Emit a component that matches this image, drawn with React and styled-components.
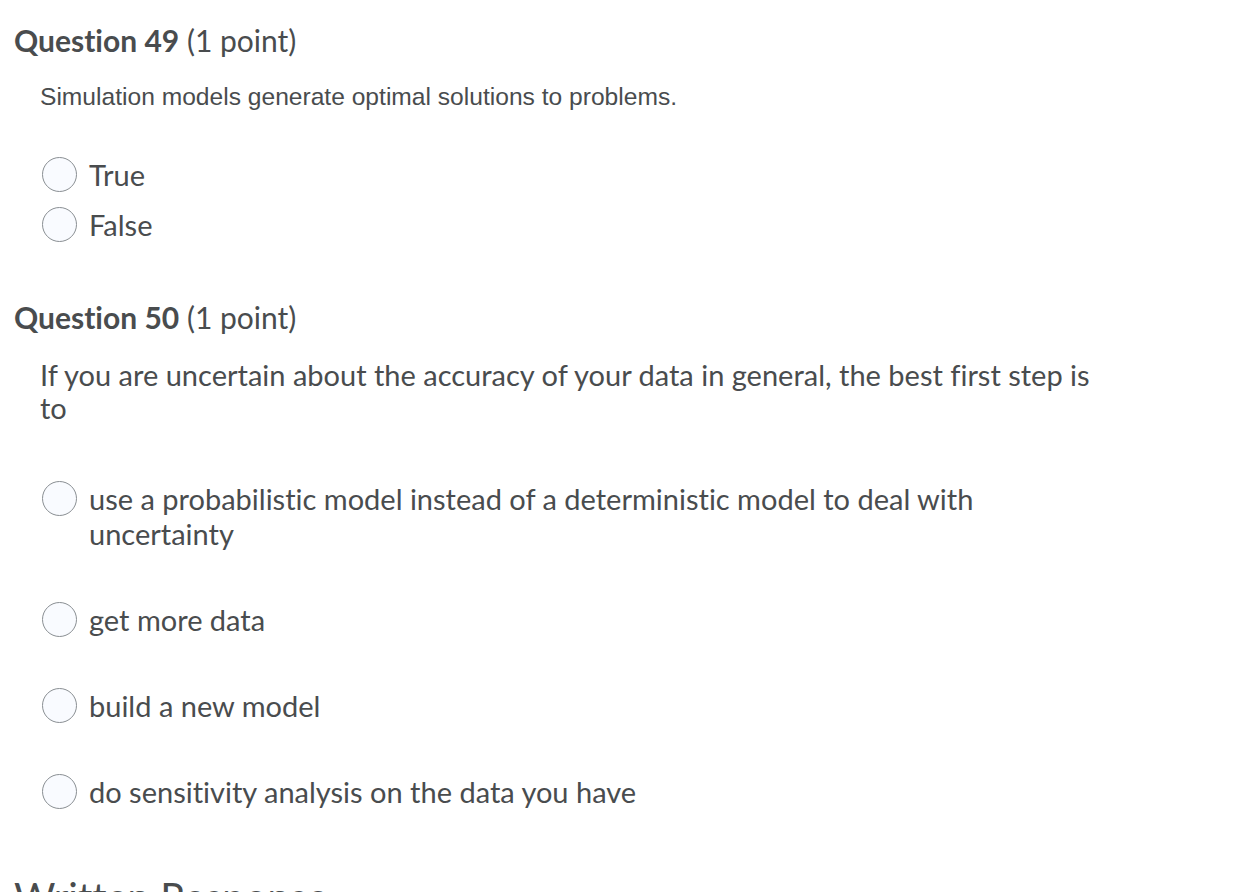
import React from "react";
import styled, { createGlobalStyle } from "styled-components";

const Global = createGlobalStyle`
  html, body { margin: 0; padding: 0; background: #ffffff; }
  body {
    font-family: Lato, "Noto Sans", sans-serif;
    color: #494c4e;
    font-variant-ligatures: none;
  }
`;

const Page = styled.main`
  padding: 22px 0 0 14px;
  overflow: hidden;
  height: 892px;
  box-sizing: border-box;
`;

const Question = styled.section`
  display: flex;
  flex-direction: column;
  margin-bottom: ${(p) => p.$after}px;
`;

const Heading = styled.h2`
  margin: 0;
  font-family: Lato, sans-serif;
  font-size: 30px;
  line-height: 36px;
  font-weight: 400;
  color: #494c4e;
  b { font-weight: 700; }
`;

const Prompt = styled.p`
  margin: ${(p) => p.$top}px 0 0 26px;
  max-width: ${(p) => p.$max}px;
  font-family: ${(p) => (p.$arial ? `"Liberation Sans", Arial, sans-serif` : `Lato, sans-serif`)};
  font-size: ${(p) => p.$size}px;
  line-height: ${(p) => p.$lh}px;
  color: #494c4e;
`;

const Options = styled.div`
  display: flex;
  flex-direction: column;
  gap: ${(p) => p.$gap}px;
  margin: ${(p) => p.$top}px 0 0 28px;
`;

const Option = styled.label`
  display: flex;
  align-items: flex-start;
  gap: 12px;
`;

const Radio = styled.span`
  flex: none;
  width: 35px;
  height: 35px;
  box-sizing: border-box;
  border-radius: 50%;
  border: 1px solid #8a8f93;
  background: #f9fbff;
`;

const Label = styled.span`
  font-family: Lato, sans-serif;
  font-size: 29px;
  line-height: 35px;
  color: #494c4e;
  max-width: 960px;
`;

const NextHeading = styled.h2`
  margin: 64px 0 0 0;
  font-family: Lato, sans-serif;
  font-size: 40px;
  line-height: 48px;
  font-weight: 400;
  color: #494c4e;
`;

const q50 = [
  "use a probabilistic model instead of a deterministic model to deal with uncertainty",
  "get more data",
  "build a new model",
  "do sensitivity analysis on the data you have",
];

export default function App() {
  return (
    <>
      <Global />
      <Page>
        <Question $after={57}>
          <Heading>
            <b>Question 49</b> (1 point)
          </Heading>
          <Prompt $arial $size={24.6} $lh={28} $top={25} $max={1100}>
            Simulation models generate optimal solutions to problems.
          </Prompt>
          <Options $gap={15} $top={46}>
            {["True", "False"].map((t) => (
              <Option key={t}>
                <Radio />
                <Label>{t}</Label>
              </Option>
            ))}
          </Options>
        </Question>
        <Question $after={0}>
          <Heading>
            <b>Question 50</b> (1 point)
          </Heading>
          <Prompt $size={29} $lh={33} $top={23} $max={1070}>
            If you are uncertain about the accuracy of your data in general, the best first step is to
          </Prompt>
          <Options $gap={51} $top={57}>
            {q50.map((t) => (
              <Option key={t}>
                <Radio />
                <Label>{t}</Label>
              </Option>
            ))}
          </Options>
        </Question>
        <NextHeading>Written Response</NextHeading>
      </Page>
    </>
  );
}
